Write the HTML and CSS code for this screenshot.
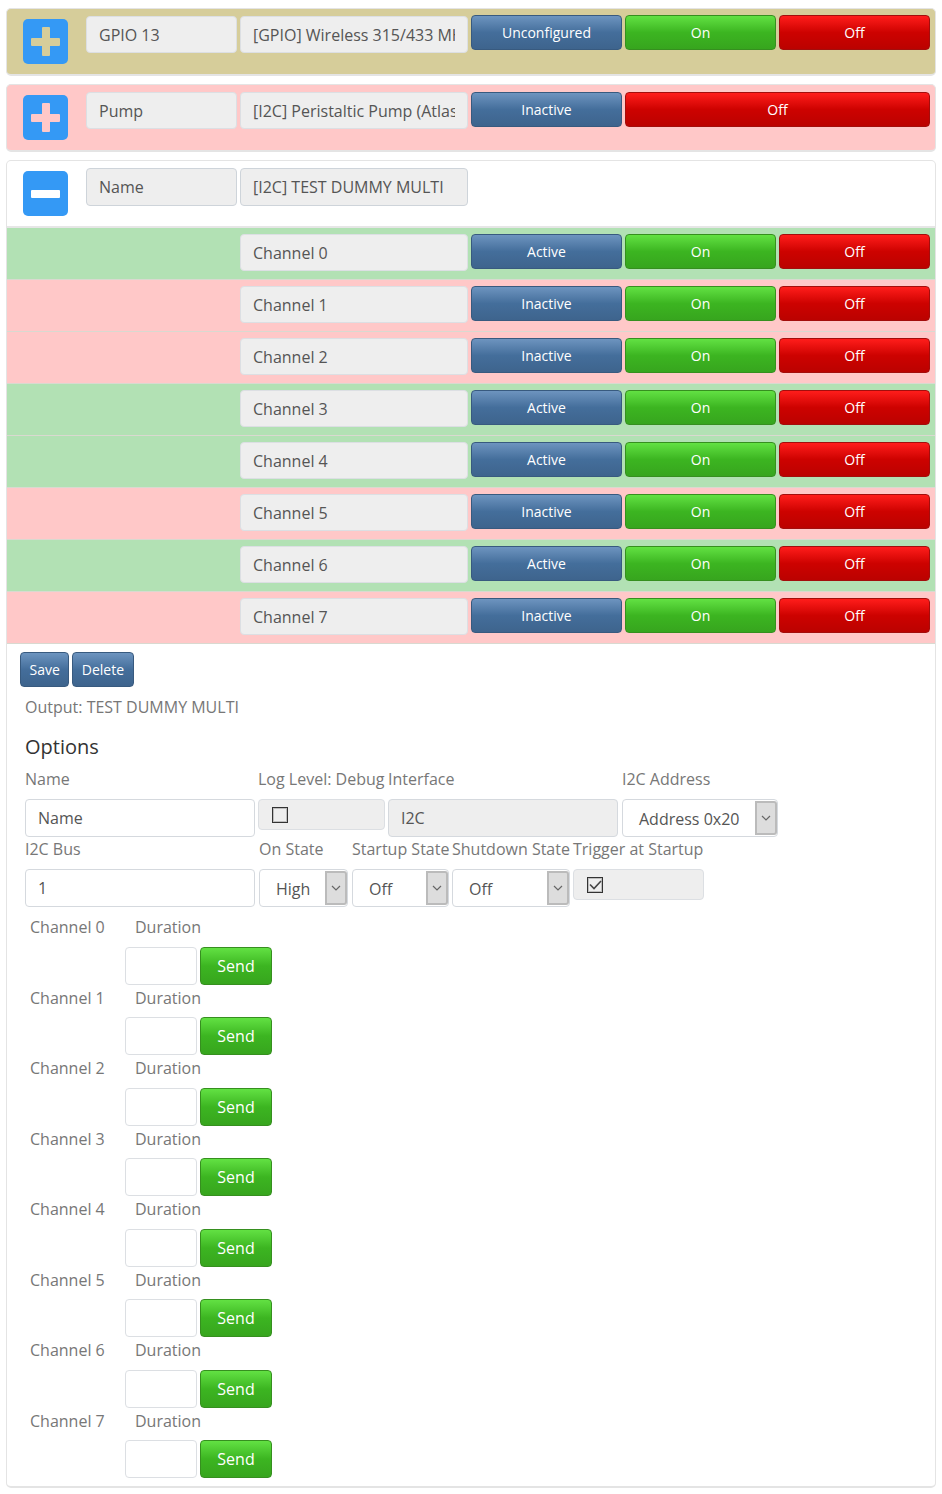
FILE: index.html
```html
<!DOCTYPE html>
<html lang="en">
<head>
<meta charset="utf-8">
<title>Outputs</title>
<link rel="stylesheet" href="styles.css">
</head>
<body>
<section class="panel tan">
  <div class="head">
    <button class="toggle"><svg viewBox="0 0 45 45" class="tan-i"><rect x="8" y="19" width="29" height="8" rx="1"/><rect x="19" y="8" width="8" height="29" rx="1"/></svg></button>
    <div class="field name"><span class="clip">GPIO 13</span></div>
    <div class="field type"><span class="clip">[GPIO] Wireless 315/433 MHz LPD/SRD</span></div>
    <div class="btns"><button class="btn blue">Unconfigured</button><button class="btn green">On</button><button class="btn red">Off</button></div>
  </div>
</section>
<section class="panel pink">
  <div class="head">
    <button class="toggle"><svg viewBox="0 0 45 45" class="pink-i"><rect x="8" y="19" width="29" height="8" rx="1"/><rect x="19" y="8" width="8" height="29" rx="1"/></svg></button>
    <div class="field name"><span class="clip">Pump</span></div>
    <div class="field type"><span class="clip">[I2C] Peristaltic Pump (Atlas Scientific)</span></div>
    <div class="btns"><button class="btn blue">Inactive</button><button class="btn red wide">Off</button></div>
  </div>
</section>
<section class="panel white">
  <div class="head open">
    <button class="toggle"><svg viewBox="0 0 45 45" class="white-i"><rect x="8" y="19" width="29" height="8" rx="1"/></svg></button>
    <div class="field name tall"><span class="clip">Name</span></div>
    <div class="field type tall"><span class="clip">[I2C] TEST DUMMY MULTI</span></div>
  </div>
  <div class="channel on"><div class="field type"><span class="clip">Channel 0</span></div><div class="btns"><button class="btn blue">Active</button><button class="btn green">On</button><button class="btn red">Off</button></div></div>
  <div class="channel off"><div class="field type"><span class="clip">Channel 1</span></div><div class="btns"><button class="btn blue">Inactive</button><button class="btn green">On</button><button class="btn red">Off</button></div></div>
  <div class="channel off"><div class="field type"><span class="clip">Channel 2</span></div><div class="btns"><button class="btn blue">Inactive</button><button class="btn green">On</button><button class="btn red">Off</button></div></div>
  <div class="channel on"><div class="field type"><span class="clip">Channel 3</span></div><div class="btns"><button class="btn blue">Active</button><button class="btn green">On</button><button class="btn red">Off</button></div></div>
  <div class="channel on"><div class="field type"><span class="clip">Channel 4</span></div><div class="btns"><button class="btn blue">Active</button><button class="btn green">On</button><button class="btn red">Off</button></div></div>
  <div class="channel off"><div class="field type"><span class="clip">Channel 5</span></div><div class="btns"><button class="btn blue">Inactive</button><button class="btn green">On</button><button class="btn red">Off</button></div></div>
  <div class="channel on"><div class="field type"><span class="clip">Channel 6</span></div><div class="btns"><button class="btn blue">Active</button><button class="btn green">On</button><button class="btn red">Off</button></div></div>
  <div class="channel off"><div class="field type"><span class="clip">Channel 7</span></div><div class="btns"><button class="btn blue">Inactive</button><button class="btn green">On</button><button class="btn red">Off</button></div></div>

  <div class="actions"><button class="btn blue small">Save</button><button class="btn blue small">Delete</button></div>
  <p class="output-title">Output: TEST DUMMY MULTI</p>
  <h4 class="options">Options</h4>

  <div class="form-row">
    <div class="cell c-name"><label>Name</label><div class="ctl">Name</div></div>
    <div class="cell c-log"><label>Log Level: Debug</label><div class="box"><span class="check"></span></div></div>
    <div class="cell c-iface"><label>Interface</label><div class="ctl grey">I2C</div></div>
    <div class="cell c-addr"><label>I2C Address</label><div class="ctl sel"><span class="sel-text">Address 0x20</span><span class="arrow"><svg viewBox="0 0 12 12"><path d="M2 4l4 4 4-4"/></svg></span></div></div>
  </div>
  <div class="form-row second">
    <div class="cell c-name"><label>I2C Bus</label><div class="ctl">1</div></div>
    <div class="cell c-on"><label>On State</label><div class="ctl sel"><span class="sel-text">High</span><span class="arrow"><svg viewBox="0 0 12 12"><path d="M2 4l4 4 4-4"/></svg></span></div></div>
    <div class="cell c-start"><label>Startup State</label><div class="ctl sel"><span class="sel-text">Off</span><span class="arrow"><svg viewBox="0 0 12 12"><path d="M2 4l4 4 4-4"/></svg></span></div></div>
    <div class="cell c-shut"><label>Shutdown State</label><div class="ctl sel"><span class="sel-text">Off</span><span class="arrow"><svg viewBox="0 0 12 12"><path d="M2 4l4 4 4-4"/></svg></span></div></div>
    <div class="cell c-trig"><label>Trigger at Startup</label><div class="box"><span class="check"><svg viewBox="0 0 14 14"><path d="M2 6.5l4 4L13 3"/></svg></span></div></div>
  </div>

  <div class="commands">
    <div class="cmd"><span class="cmd-name">Channel 0</span><span class="cmd-dur">Duration</span><div class="dur-input"></div><button class="btn green send">Send</button></div>
    <div class="cmd"><span class="cmd-name">Channel 1</span><span class="cmd-dur">Duration</span><div class="dur-input"></div><button class="btn green send">Send</button></div>
    <div class="cmd"><span class="cmd-name">Channel 2</span><span class="cmd-dur">Duration</span><div class="dur-input"></div><button class="btn green send">Send</button></div>
    <div class="cmd"><span class="cmd-name">Channel 3</span><span class="cmd-dur">Duration</span><div class="dur-input"></div><button class="btn green send">Send</button></div>
    <div class="cmd"><span class="cmd-name">Channel 4</span><span class="cmd-dur">Duration</span><div class="dur-input"></div><button class="btn green send">Send</button></div>
    <div class="cmd"><span class="cmd-name">Channel 5</span><span class="cmd-dur">Duration</span><div class="dur-input"></div><button class="btn green send">Send</button></div>
    <div class="cmd"><span class="cmd-name">Channel 6</span><span class="cmd-dur">Duration</span><div class="dur-input"></div><button class="btn green send">Send</button></div>
    <div class="cmd"><span class="cmd-name">Channel 7</span><span class="cmd-dur">Duration</span><div class="dur-input"></div><button class="btn green send">Send</button></div>
  </div>
</section>
</body>
</html>
```
FILE: styles.css
```css
* { box-sizing: border-box; }
html, body { margin: 0; padding: 0; }
body {
  padding: 8px 6px 0;
  background: #fff;
  font-family: "Open Sans", "Noto Sans", sans-serif;
  font-size: 16px;
  color: #555;
}
.panel {
  width: 930px;
  border: 1px solid #e4e4e4;
  border-bottom-width: 2px;
  border-radius: 5px;
  margin-bottom: 8px;
  height: 68px;
  overflow: hidden;
}
.tan { background: #d6cd9a; }
.pink { background: #ffc8c8; }
.white { background: #fff; height: 1328px; margin-bottom: 0; }
.head {
  display: flex;
  align-items: flex-start;
  padding: 7px 4px 0 0;
  height: 64px;
}
.head.open { height: 67px; border-bottom: 2px solid #e6e6e6; }
.toggle {
  width: 45px;
  height: 45px;
  margin: 3px 18px 0 16px;
  padding: 0;
  border: 0;
  border-radius: 5px;
  background: #3499f5;
  flex: none;
}
.toggle svg { display: block; width: 45px; height: 45px; }
.tan-i rect { fill: #d6cd9a; }
.pink-i rect { fill: #ffc8c8; }
.white-i rect { fill: #fff; }
.field {
  flex: none;
  height: 37px;
  padding: 0 12px;
  line-height: 37px;
  background: #eee;
  border: 1px solid #dcdfe3;
  border-radius: 4px;
  color: #555;
  white-space: nowrap;
}
.clip { display: block; overflow: hidden; }
.name { width: 151px; margin-right: 3px; }
.type { width: 228px; margin-right: 3px; }
.tall { height: 38px; border-color: #ced4da; line-height: 36px; }
.btns { flex: 1; display: flex; gap: 3px; }
.tan .btns { margin-top: -1px; }
.btn {
  display: block;
  font-family: inherit;
  font-size: 14px;
  color: #fff;
  height: 35px;
  padding: 0;
  border-radius: 4px;
  border: 1px solid;
}
.btns .btn { flex: 0 0 151px; }
.btns .btn.wide { flex: 0 0 305px; }
.blue { background: linear-gradient(#6d94bf, #446e9b 50%, #3e648d); border-color: #385a7f; }
.green { background: linear-gradient(#62e143, #3cb521 50%, #37a51e); border-color: #368f1f; }
.red { background: linear-gradient(#ff1d1b, #cd0200 50%, #bb0200); border-color: #a30e0c; }
.channel {
  display: flex;
  align-items: flex-start;
  height: 52px;
  padding: 6px 4px 0 233px;
  border-bottom: 1px solid #d9d9d0;
}
.channel:last-of-type { border-bottom: 0; }
.on { background: #b2e1b4; }
.off { background: #ffc8c8; }
.actions { display: flex; gap: 3px; padding: 8px 0 0 13px; }
.small { padding: 0 8.5px; }
.output-title { margin: 9px 0 0 18px; line-height: 22px; color: #777; }
.options { margin: 16px 0 0 18px; font-size: 20px; font-weight: 400; line-height: 26px; color: #333; }
.form-row { display: flex; align-items: flex-start; padding-left: 18px; margin-top: 8px; height: 70px; }
.form-row.second { margin-top: 0; }
.cell { flex: none; }
.cell label { display: block; height: 31px; line-height: 22px; color: #777; white-space: nowrap; }
.c-name { width: 233px; }
.c-name .ctl { width: 230px; }
.c-log { width: 130px; }
.c-log .box { width: 127px; }
.c-iface { width: 234px; }
.c-iface .ctl { width: 230px; }
.c-addr { width: 156px; }
.c-on { width: 93px; margin-left: 1px; }
.c-on .ctl { width: 89px; }
.c-start { width: 100px; }
.c-start .ctl { width: 97px; }
.c-shut { width: 121px; }
.c-shut .ctl { width: 118px; }
.c-trig { width: 131px; }
.ctl {
  height: 38px;
  line-height: 36px;
  padding: 0 12px;
  background: #fff;
  border: 1px solid #d5d9de;
  border-radius: 4px;
  color: #555;
}
.grey { background: #eee; }
.box {
  height: 31px;
  background: #eee;
  border: 1px solid #dcdfe3;
  border-radius: 4px;
  padding: 7px 0 0 13px;
}
.check {
  display: block;
  width: 16px;
  height: 16px;
  border: 1px solid #333;
  box-shadow: inset 0 0 0 1px rgba(0, 0, 0, .2);
}
.check svg { display: block; width: 14px; height: 14px; fill: none; stroke: #444; stroke-width: 1.6; }
.sel { display: flex; padding: 0 0 0 16px; }
.sel-text { flex: 1; line-height: 38px; }
.arrow {
  flex: none;
  width: 22px;
  height: 34px;
  margin: 1px 0;
  background: #ddd;
  border: 2px solid #bbb;
  border-radius: 0 3px 3px 0;
  display: flex;
  align-items: center;
  justify-content: center;
}
.arrow svg { width: 12px; height: 12px; fill: none; stroke: #666; stroke-width: 1.2; }
.commands { margin-top: 10px; padding-left: 18px; }
.cmd {
  display: grid;
  grid-template-columns: 100px 72px 3px 72px;
  grid-template-rows: 28.5px 38px 4px;
  height: 70.5px;
}
.cmd-name { grid-column: 1; grid-row: 1; padding-left: 5px; line-height: 22px; color: #777; margin-top: -2px; white-space: nowrap; }
.cmd-dur { grid-column: 2 / 5; grid-row: 1; padding-left: 10px; line-height: 22px; color: #777; margin-top: -2px; }
.dur-input { grid-column: 2; grid-row: 2; background: #fff; border: 1px solid #dcdfe3; border-radius: 4px; }
.send { grid-column: 4; grid-row: 2; height: 38px; font-size: 16px; }
```
